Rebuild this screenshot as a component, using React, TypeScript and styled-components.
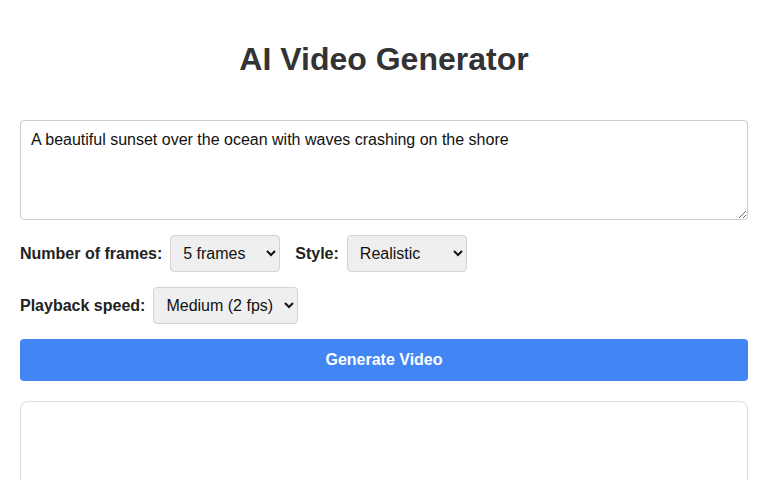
import React, { useState } from 'react';
import styled, { createGlobalStyle } from 'styled-components';

const GlobalStyle = createGlobalStyle`
  body {
    margin: 0;
    font-family: "Liberation Sans", Arial, sans-serif;
    background: #fff;
    color: #222;
  }
`

const Page = styled.div`
  padding: 20px;
`

const Title = styled.h1`
  text-align: center;
  font-size: 32px;
  font-weight: bold;
  color: #333;
  margin: 21px 0 42px;
`

const Prompt = styled.textarea`
  display: block;
  box-sizing: border-box;
  width: 100%;
  height: 100px;
  padding: 10px;
  border: 1px solid #ccc;
  border-radius: 4px;
  font-family: "Liberation Sans", Arial, sans-serif;
  font-size: 16px;
  color: #111;
  margin-bottom: 15px;
  resize: vertical;
`

const Row = styled.div`
  display: flex;
  align-items: center;
  gap: 15px;
  margin-bottom: 15px;
`

const Field = styled.label`
  display: flex;
  align-items: center;
  gap: 8px;
  font-weight: bold;
  font-size: 16px;
  color: #222;
`

const Select = styled.select<{ $width: number }>`
  width: ${p => p.$width}px;
  height: 37px;
  padding: 8px;
  font-family: "Liberation Sans", Arial, sans-serif;
  font-size: 16px;
  font-weight: normal;
  color: #111;
  background: #efefef;
  border: 1px solid #d4d4d4;
  border-radius: 4px;
`

const GenerateButton = styled.button`
  display: block;
  width: 100%;
  padding: 12px;
  border: none;
  border-radius: 4px;
  background: #4285f4;
  color: #fff;
  font-family: "Liberation Sans", Arial, sans-serif;
  font-size: 16px;
  font-weight: bold;
  cursor: pointer;
  margin-bottom: 20px;
`

const Output = styled.div`
  height: 200px;
  border: 1px solid #ddd;
  border-radius: 8px;
`

const App = () => {
  const [prompt, setPrompt] = useState('A beautiful sunset over the ocean with waves crashing on the shore')
  const [frames, setFrames] = useState('5')
  const [style, setStyle] = useState('realistic')
  const [speed, setSpeed] = useState('2')

  return (
    <Page>
      <GlobalStyle />
      <Title>AI Video Generator</Title>
      <Prompt value={prompt} onChange={e => setPrompt(e.target.value)} />
      <Row>
        <Field>
          Number of frames:
          <Select $width={110} value={frames} onChange={e => setFrames(e.target.value)}>
            <option value="3">3 frames</option>
            <option value="5">5 frames</option>
            <option value="8">8 frames</option>
          </Select>
        </Field>
        <Field>
          Style:
          <Select $width={120} value={style} onChange={e => setStyle(e.target.value)}>
            <option value="realistic">Realistic</option>
            <option value="cartoon">Cartoon</option>
            <option value="anime">Anime</option>
          </Select>
        </Field>
      </Row>
      <Row>
        <Field>
          Playback speed:
          <Select $width={145} value={speed} onChange={e => setSpeed(e.target.value)}>
            <option value="1">Slow (1 fps)</option>
            <option value="2">Medium (2 fps)</option>
            <option value="4">Fast (4 fps)</option>
          </Select>
        </Field>
      </Row>
      <GenerateButton>Generate Video</GenerateButton>
      <Output />
    </Page>
  );
};

export default App;
